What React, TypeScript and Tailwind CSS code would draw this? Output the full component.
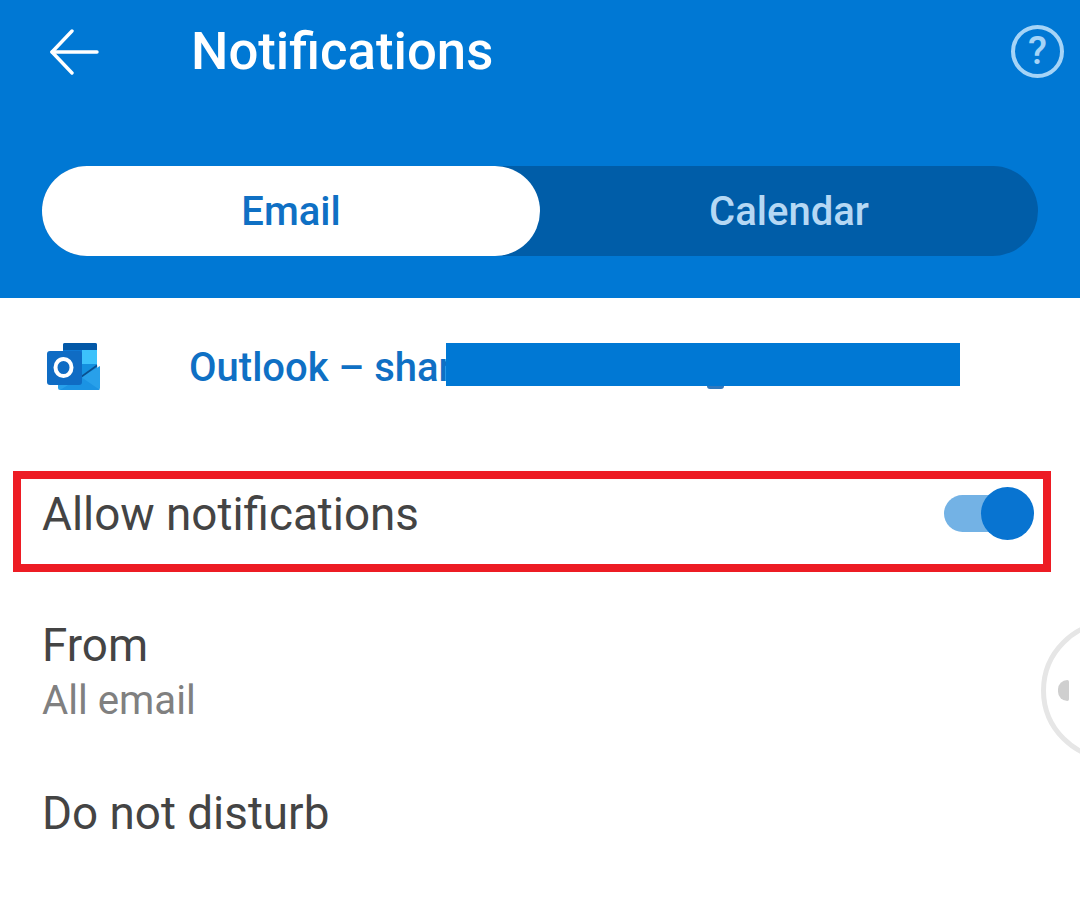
const roboto = "font-['Roboto',sans-serif]";

function BackArrow() {
  return (
    <svg width="50" height="48" viewBox="0 0 50 48" fill="none" stroke="#fff" strokeWidth="3.4" strokeLinecap="round" strokeLinejoin="round">
      <path d="M23 4 L3 25 L23 46" />
      <path d="M48 25 L3 25" />
    </svg>
  );
}

function OutlookLogo() {
  return (
    <svg width="53" height="47" viewBox="0 0 53 47" className="shrink-0">
      <rect x="16" y="0" width="34" height="26" rx="2" fill="#0f78d4" />
      <path d="M16 2 a2 2 0 0 1 2 -2 L48 0 a2 2 0 0 1 2 2 L50 7 L16 7 Z" fill="#0358a7" />
      <rect x="35" y="7" width="15" height="14" fill="#3cc2fb" />
      <rect x="35" y="21" width="15" height="13" fill="#1490df" />
      <path d="M11 34 L11 45 a2 2 0 0 0 2 2 L51 47 a2 2 0 0 0 2 -2 L53 23 L34 34 Z" fill="#28a0ea" />
      <path d="M34 34 L53 47 L13 47 Z" fill="#1b93e3" />
      <path d="M34 34 L50 22.5" stroke="#0a4f8f" strokeWidth="1.6" fill="none" />
      <rect x="0" y="8" width="35" height="34" rx="3" fill="#0f6cc4" />
      <ellipse cx="16.5" cy="24.5" rx="8" ry="8.5" fill="none" stroke="#fff" strokeWidth="4" />
    </svg>
  );
}

export default function App() {
  return (
    <div className={`relative h-[923px] w-[1080px] overflow-hidden bg-white ${roboto}`}>
      <header className="h-[298px] bg-[#0078d4] pt-[16px]">
        <div className="flex h-[70px] items-center pl-[49px] pr-[16px]">
          <BackArrow />
          <h1 className="ml-[92px] text-[52.7px] font-medium leading-[70px] text-white">Notifications</h1>
          <div className="ml-auto flex h-[53px] w-[53px] items-center justify-center rounded-full border-[4px] border-[#a5d4f7] text-[39px] font-medium text-[#a5d4f7]">
            ?
          </div>
        </div>
        <div className="mx-[42px] mt-[80px] flex h-[90px] rounded-full bg-[#005da8] pt-px">
          <div className="-mt-px flex w-[498px] items-center justify-center rounded-full bg-white pt-px text-[40px] font-medium text-[#0f70c4]">
            Email
          </div>
          <div className="flex flex-1 items-center justify-center text-[40px] font-medium text-[#b5d8f4]">
            Calendar
          </div>
        </div>
      </header>

      <div className="flex h-[173px] items-start pl-[47px] pt-[45px]">
        <OutlookLogo />
        <span className="-mt-px ml-[89px] text-[40px] font-medium leading-[52px] text-[#0f70c4]">Outlook – shar</span>
      </div>

      <div className="ml-[13px] flex h-[101px] w-[1038px] items-center border-[8px] border-[#ed1c24] pb-[17px] pl-[21px]">
        <span className="mt-[4px] text-[45.8px] leading-[70px] text-[#444444]">Allow notifications</span>
        <div className="relative ml-auto mr-[9px] h-[37px] w-[90px]">
          <div className="h-[37px] w-[66px] rounded-full bg-[#73b2e5]" />
          <div className="absolute right-0 top-[-8px] h-[53px] w-[53px] rounded-full bg-[#0874d1]" />
        </div>
      </div>

      <div className="pl-[42px] pt-[46px]">
        <div className="text-[45.8px] leading-[56px] text-[#444444]">From</div>
        <div className="text-[40.2px] leading-[54px] text-[#808080]">All email</div>
        <div className="mt-[58px] text-[45.8px] leading-[56px] text-[#444444]">Do not disturb</div>
      </div>

      {/* redaction bar */}
      <div className="absolute left-[446px] top-[343px] h-[43px] w-[514px] bg-[#0078d4]" />
      <div className="absolute left-[707px] top-[386px] h-[3px] w-[17px] rounded-b-full bg-[#2f78bd]" />

      {/* floating assistive button */}
      <div className="absolute left-[1041px] top-[620px] h-[141px] w-[141px] rounded-full border-[5px] border-[#e6e6e6] bg-white">
        <div className="absolute left-[12px] top-[55px] h-[21px] w-[11px] rounded-l-[11px] rounded-r-[2px] bg-[#cfcfcf]" />
      </div>
    </div>
  );
}
